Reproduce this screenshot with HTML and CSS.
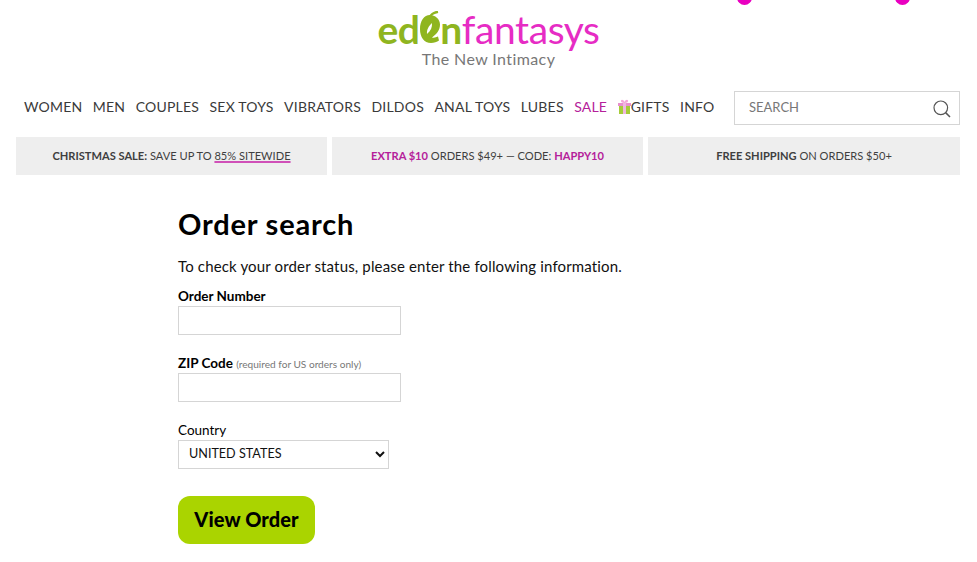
FILE: index.html
```html
<!DOCTYPE html>
<html lang="en">
<head>
    <meta charset="UTF-8">
    <meta name="viewport" content="width=device-width, initial-scale=1.0">
    <title>Order search</title>
    <link rel="stylesheet" href="styles.css">
</head>
<body>
    <div class="cart-dots">
        <span class="dot dot-account"></span>
        <span class="dot dot-cart"></span>
    </div>

    <header class="logo-wrap">
        <a class="logo" href="#">
            <span class="logo-eden">ed<svg class="leaf" width="20" height="33" viewBox="0 0 20 33" aria-hidden="true">
                <path fill="#8fb51f" d="M10 4C4 4 0 10 0 18s4 14 11 14c3 0 6-1 8-2.500l-1-4c-2 1-4 1.500-6 1 4-3 8-7 8-13C20 8 15 4 10 4z"/>
                <path fill="#fff" d="M7 23C6.500 19 8.500 15 12 12c.3 4-1.200 8-5 11z"/>
                <path fill="none" stroke="#8fb51f" stroke-width="2.500" d="M10 6C11 3.500 14 1.500 18 .8"/>
            </svg>n</span><span class="logo-fantasys">fantasys</span>
        </a>
        <div class="tagline">The New Intimacy</div>
    </header>

    <nav class="main-nav">
        <ul class="nav-list">
            <li><a href="#">WOMEN</a></li>
            <li><a href="#">MEN</a></li>
            <li><a href="#">COUPLES</a></li>
            <li><a href="#">SEX TOYS</a></li>
            <li><a href="#">VIBRATORS</a></li>
            <li><a href="#">DILDOS</a></li>
            <li><a href="#">ANAL TOYS</a></li>
            <li><a href="#">LUBES</a></li>
            <li><a class="nav-sale" href="#">SALE</a></li>
            <li>
                <a class="nav-gifts" href="#"><svg width="13" height="15" viewBox="0 0 13 15" aria-hidden="true">
                        <path fill="#f4a6d8" d="M6.500 4C4 4 2.500 3 3 1.500 3.500 0 5.500.5 6.500 3c1-2.500 3-3 3.500-1.500S9 4 6.500 4z"/>
                        <rect x="0" y="4" width="13" height="3" fill="#e88fce"/>
                        <rect x="1" y="7" width="11" height="8" fill="#a6cc3a"/>
                        <rect x="5" y="4" width="3" height="11" fill="#f0b8e0"/>
                    </svg>GIFTS</a>
            </li>
            <li><a href="#">INFO</a></li>
        </ul>
        <form class="search-box">
            <input class="search-input" type="text" placeholder="SEARCH">
            <svg class="search-icon" width="18" height="18" viewBox="0 0 18 18" aria-hidden="true">
                <circle cx="7.800" cy="7.800" r="6.800" fill="none" stroke="#555" stroke-width="1.200"/>
                <path d="M12.600 12.600 17 17" fill="none" stroke="#555" stroke-width="1.500"/>
            </svg>
        </form>
    </nav>

    <div class="promo-row">
        <div class="promo"><b>CHRISTMAS SALE:</b> SAVE UP TO <span class="promo-link">85% SITEWIDE</span></div>
        <div class="promo"><b class="pink">EXTRA $10</b> ORDERS $49+ — CODE: <b class="pink">HAPPY10</b></div>
        <div class="promo"><b>FREE SHIPPING</b> ON ORDERS $50+</div>
    </div>

    <main class="order-search">
        <h1>Order search</h1>
        <p class="intro">To check your order status, please enter the following information.</p>
        <form>
            <div class="field">
                <label for="order-number">Order Number</label>
                <input class="text-input" id="order-number" type="text">
            </div>
            <div class="field">
                <label for="zip">ZIP Code <small>(required for US orders only)</small></label>
                <input class="text-input" id="zip" type="text">
            </div>
            <div class="field">
                <label class="label-plain" for="country">Country</label>
                <select class="country-select" id="country">
                    <option>UNITED STATES</option>
                    <option>CANADA</option>
                </select>
            </div>
            <button class="view-order" type="button">View Order</button>
        </form>
    </main>
</body>
</html>
```

FILE: styles.css
```css
* {
    box-sizing: border-box;
}
body {
    margin: 0;
    height: 562px;
    overflow: hidden;
    font-family: Lato, "Open Sans", sans-serif;
    color: #000;
    background: #fff;
}
a {
    color: inherit;
    text-decoration: none;
}
.cart-dots .dot {
    position: absolute;
    top: -10px;
    width: 15px;
    height: 15px;
    border-radius: 50%;
    background: #e900c0;
}
.dot-account {
    left: 737px;
}
.dot-cart {
    left: 895px;
}
.logo-wrap {
    height: 91px;
    padding-top: 11px;
    text-align: center;
}
.logo {
    display: flex;
    justify-content: center;
    align-items: flex-end;
    height: 37px;
    font-size: 39px;
    line-height: 37px;
}
.logo-eden {
    display: flex;
    align-items: flex-end;
    font-weight: 700;
    color: #8fb51f;
    letter-spacing: -0.5px;
}
.leaf {
    margin: 0 0 4px 1px;
}
.logo-fantasys {
    font-weight: 400;
    letter-spacing: -0.4px;
    color: #e62cc4;
}
.tagline {
    margin-top: 3px;
    font-size: 16px;
    line-height: 15px;
    letter-spacing: 0.4px;
    color: #777;
}
.main-nav {
    display: flex;
    align-items: center;
    justify-content: space-between;
    height: 34px;
    padding: 0 17px 0 24px;
}
.nav-list {
    display: flex;
    gap: 10.500px;
    margin: 0 0 3px;
    padding: 0;
    list-style: none;
    font-size: 14px;
    letter-spacing: 0.2px;
    white-space: nowrap;
    color: #3a3a3a;
}
.nav-sale {
    color: #b5209a;
}
.nav-gifts svg {
    vertical-align: -2px;
}
.search-box {
    position: relative;
    flex-shrink: 0;
    width: 226px;
    height: 34px;
    border: 1px solid #d5d5d5;
}
.search-input {
    width: 100%;
    height: 100%;
    padding: 0 40px 2px 14px;
    border: 0;
    outline: 0;
    font-family: inherit;
    font-size: 13px;
    background: transparent;
}
.search-input::placeholder {
    color: #777;
    opacity: 1;
}
.search-icon {
    position: absolute;
    top: 8px;
    right: 8px;
}
.promo-row {
    display: grid;
    grid-template-columns: 311px 311px 312px;
    gap: 5px;
    margin: 12px 17px 0 16px;
}
.promo {
    height: 38px;
    line-height: 38px;
    text-align: center;
    font-size: 11.100px;
    color: #3f3f3f;
    background: #eee;
}
.promo b {
    font-weight: 700;
}
.promo .pink {
    color: #b5209a;
}
.promo-link {
    text-decoration: underline 2px #d050b8;
    text-underline-offset: 1px;
}
.order-search {
    padding: 32px 0 0 178px;
}
.order-search h1 {
    margin: 0;
    font-size: 29px;
    line-height: 34px;
    font-weight: 700;
    letter-spacing: 0.8px;
}
.intro {
    margin: 16px 0 0;
    font-size: 15px;
    line-height: 18px;
    letter-spacing: 0.15px;
    color: #111;
}
.intro + form {
    margin-top: 13px;
}
.field {
    margin-bottom: 20px;
}
.field label {
    display: block;
    height: 18px;
    font-size: 13.500px;
    line-height: 17px;
    font-weight: 700;
}
.field label.label-plain {
    font-weight: 400;
}
.field small {
    font-size: 10.100px;
    font-weight: 400;
    color: #777;
}
.text-input {
    display: block;
    width: 223px;
    height: 29px;
    border: 1px solid #d5d5d5;
    outline: 0;
}
.country-select {
    display: block;
    width: 211px;
    height: 29px;
    padding: 0 0 3px 6px;
    border: 1px solid #d5d5d5;
    border-radius: 0;
    font-family: inherit;
    font-size: 12.600px;
    color: #111;
    background: #fff;
}
.view-order {
    display: block;
    width: 137px;
    height: 48px;
    margin-top: 27px;
    padding: 0 0 2px;
    border: 0;
    border-radius: 12px;
    font-family: inherit;
    font-size: 20px;
    font-weight: 900;
    letter-spacing: 0.1px;
    color: #000;
    background: #aad400;
}
```
